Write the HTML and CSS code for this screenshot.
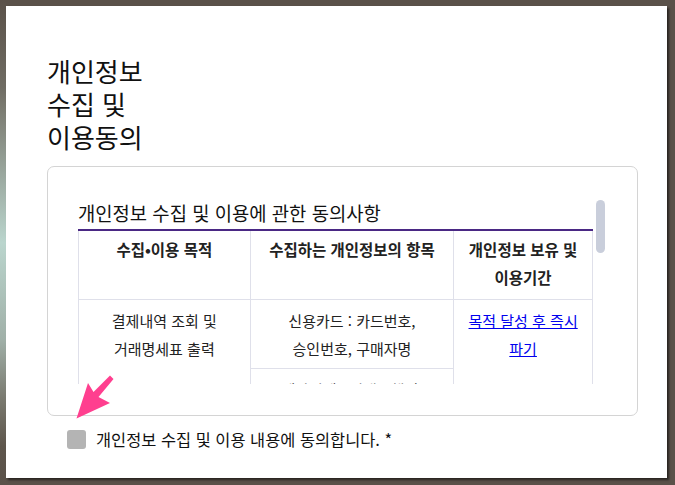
FILE: index.html
```html
<!DOCTYPE html>
<html lang="ko">
<head>
<meta charset="utf-8">
<title>개인정보 수집 및 이용동의</title>
<link rel="stylesheet" href="styles.css">
</head>
<body>
<div class="desktop">
  <main class="panel">
    <h1 class="title">개인정보<br>수집 및<br>이용동의</h1>
    <section class="terms-box">
      <div class="terms-scroll">
        <div class="terms-content">
          <div class="terms-caption">개인정보 수집 및 이용에 관한 동의사항</div>
          <table class="terms-table">
            <colgroup>
              <col class="col-purpose">
              <col class="col-items">
              <col class="col-period">
            </colgroup>
            <thead>
              <tr>
                <th>수집•이용 목적</th>
                <th>수집하는 개인정보의 항목</th>
                <th>개인정보 보유 및 이용기간</th>
              </tr>
            </thead>
            <tbody>
              <tr>
                <td rowspan="3">결제내역 조회 및 거래명세표 출력</td>
                <td>신용카드 : 카드번호,<br>승인번호, 구매자명</td>
                <td rowspan="3"><a href="#">목적 달성 후 즉시 파기</a></td>
              </tr>
              <tr>
                <td>계좌이체 : 거래은행명,<br>계좌번호, 거래자 성명</td>
              </tr>
              <tr>
                <td>휴대폰 : 휴대폰번호,<br>통신사, 결제승인번호</td>
              </tr>
            </tbody>
          </table>
          <p class="terms-note">※ 위 사항에 대한 동의를 거부할 수 있으나, 거부 시 결제 서비스 이용이 제한될 수 있습니다.</p>
        </div>
      </div>
      <div class="scroll-thumb"></div>
    </section>
    <label class="agree">
      <span class="agree-check"></span>
      <span class="agree-text">개인정보 수집 및 이용 내용에 동의합니다. *</span>
    </label>
    <svg class="pointer" width="50" height="50" viewBox="0 0 50 50" aria-hidden="true">
      <polygon points="6.5,48.5 18,13 23.5,22 40,5.5 43.5,9 28.5,27 40,33" fill="#ff3f8f"/>
    </svg>
  </main>
</div>
</body>
</html>
```
FILE: styles.css
```css
html, body {
  margin: 0;
  padding: 0;
}
body {
  width: 675px;
  height: 485px;
  overflow: hidden;
  background:
    linear-gradient(to bottom, #5a5149 0%, #6f6c63 18%, #7a7a70 22%, #bad5cd 50%, #a0b0a8 70%, #7a7a70 82%, #5e564c 92%, #5a5149 100%) left top / 6px 100% no-repeat,
    #5a5149;
  font-family: "Noto Sans CJK KR", "Noto Sans", sans-serif;
  color: #111;
  word-break: keep-all;
}
.desktop {
  padding: 6px 0 0 6px;
}
.panel {
  position: relative;
  box-sizing: border-box;
  width: 661px;
  height: 472px;
  background: #fff;
  box-shadow: 2px 2px 2px rgba(0, 0, 0, 0.55);
  padding: 48px 29px 0 41px;
}
.title {
  margin: 0;
  font-size: 26px;
  line-height: 33px;
  font-weight: 400;
  color: #111;
}
.terms-box {
  position: relative;
  margin-top: 13px;
  height: 250px;
  box-sizing: border-box;
  border: 1px solid #d4d4d4;
  border-radius: 7px;
  padding: 33px 30px 30px 30px;
}
.terms-scroll {
  height: 184px;
  overflow: hidden;
}
.scroll-thumb {
  position: absolute;
  left: 548px;
  top: 33px;
  width: 9px;
  height: 53px;
  border-radius: 5px;
  background: #c9cedb;
}
.terms-content {
  min-height: 639px;
  width: 515px;
}
.terms-caption {
  font-size: 18.8px;
  line-height: 26px;
  padding-bottom: 3px;
  color: #111;
}
.terms-table {
  width: 515px;
  border-collapse: collapse;
  border-top: 2px solid #4a2884;
  font-size: 15px;
  line-height: 28px;
  color: #222;
}
.col-purpose { width: 172px; }
.col-items { width: 204px; }
.col-period { width: 139px; }
.terms-table th,
.terms-table td {
  border: 1px solid #dfe0ea;
  border-top: none;
  padding: 7px 6px;
  text-align: center;
  vertical-align: top;
}
.terms-table th {
  font-weight: 700;
  font-size: 15.5px;
  padding-top: 4px;
  padding-bottom: 8px;
}
.terms-table td {
  padding-top: 7px;
  padding-bottom: 5px;
}
.terms-table tbody tr:first-child td {
  border-top: 1px solid #dfe0ea;
}
.terms-table a {
  color: #0000ee;
  text-decoration: underline;
}
.terms-note {
  margin: 12px 0 0;
  font-size: 13px;
  line-height: 22px;
  color: #555;
}
.agree {
  display: flex;
  align-items: center;
  gap: 10px;
  margin: 13px 0 0 20px;
}
.agree-check {
  width: 19px;
  height: 19px;
  border-radius: 3px;
  background: #b4b4b4;
  flex: none;
}
.agree-text {
  font-size: 16.4px;
  line-height: 20px;
  color: #111;
}
.pointer {
  position: absolute;
  left: 64px;
  top: 364px;
}
```
